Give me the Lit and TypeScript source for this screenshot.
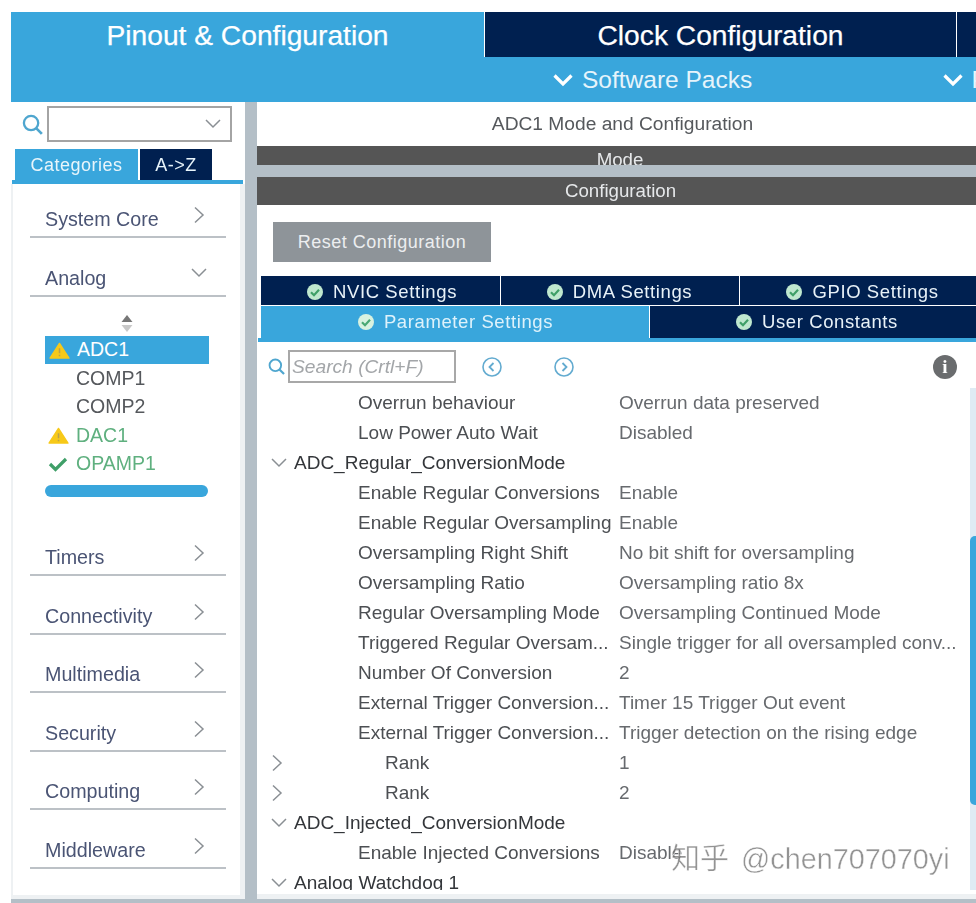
import { LitElement, html, css } from "lit";
import { customElement } from "lit/decorators.js";

const chevR = () => html`<svg class="ch r" viewBox="0 0 14 18" width="14" height="18"><path d="M3 1.5l8 7.5-8 7.5" fill="none" stroke="#8a8f94" stroke-width="1.5"/></svg>`;
const chevD = () => html`<svg class="ch d" viewBox="0 0 18 12" width="18" height="12"><path d="M2 2l7 7 7-7" fill="none" stroke="#8a8f94" stroke-width="1.5"/></svg>`;
const whiteChev = html`<svg viewBox="0 0 22 14" width="22" height="14"><path d="M2.5 2.5L11 11l8.5-8.5" fill="none" stroke="#fff" stroke-width="3.2"/></svg>`;
const okDot = html`<svg viewBox="0 0 18 18" width="18" height="18"><circle cx="9" cy="9" r="8" fill="#bfe8cf"/><path d="M5 9.2l3 3 5-5.4" fill="none" stroke="#3f9f68" stroke-width="2.2"/></svg>`;
const okDotB = html`<svg viewBox="0 0 18 18" width="18" height="18"><circle cx="9" cy="9" r="8" fill="#d8f2e0"/><path d="M5 9.2l3 3 5-5.4" fill="none" stroke="#49a873" stroke-width="2.2"/></svg>`;
const warn = html`<svg viewBox="0 0 22 18" width="21" height="17"><path d="M11 1.5L21 17H1z" fill="#f7c919" stroke="#f7c919" stroke-width="1.5" stroke-linejoin="round"/><path d="M11 6.5v5.5M11 13.5v1.6" stroke="#b9a24e" stroke-width="1.6"/></svg>`;
const tick = html`<svg viewBox="0 0 20 16" width="20" height="16"><path d="M2 8l5.5 5.5L18 3" fill="none" stroke="#3f9f68" stroke-width="3.2"/></svg>`;
const lens = (size: number) => html`<svg viewBox="0 0 22 22" width=${size} height=${size}><circle cx="9.5" cy="9.5" r="7.5" fill="none" stroke="#4fa6cf" stroke-width="2.4"/><path d="M14.8 14.8l6 6" stroke="#4fa6cf" stroke-width="2.8"/></svg>`;
const navBtn = (d: string) => html`<svg viewBox="0 0 22 22" width="22" height="22"><circle cx="11" cy="11" r="9" fill="none" stroke="#63abd0" stroke-width="1.6"/><path d=${d} fill="none" stroke="#63abd0" stroke-width="1.8"/></svg>`;

const cats = ["System Core", "Analog", "Timers", "Connectivity", "Multimedia", "Security", "Computing", "Middleware"];

type Row = { k: "p" | "g" | "r"; a: string; b?: string };
const rows: Row[] = [
  { k: "p", a: "Overrun behaviour", b: "Overrun data preserved" },
  { k: "p", a: "Low Power Auto Wait", b: "Disabled" },
  { k: "g", a: "ADC_Regular_ConversionMode" },
  { k: "p", a: "Enable Regular Conversions", b: "Enable" },
  { k: "p", a: "Enable Regular Oversampling", b: "Enable" },
  { k: "p", a: "Oversampling Right Shift", b: "No bit shift for oversampling" },
  { k: "p", a: "Oversampling Ratio", b: "Oversampling ratio 8x" },
  { k: "p", a: "Regular Oversampling Mode", b: "Oversampling Continued Mode" },
  { k: "p", a: "Triggered Regular Oversam...", b: "Single trigger for all oversampled conv..." },
  { k: "p", a: "Number Of Conversion", b: "2" },
  { k: "p", a: "External Trigger Conversion...", b: "Timer 15 Trigger Out event" },
  { k: "p", a: "External Trigger Conversion...", b: "Trigger detection on the rising edge" },
  { k: "r", a: "Rank", b: "1" },
  { k: "r", a: "Rank", b: "2" },
  { k: "g", a: "ADC_Injected_ConversionMode" },
  { k: "p", a: "Enable Injected Conversions", b: "Disable" },
  { k: "g", a: "Analog Watchdog 1" },
];

@customElement("app-root")
export class AppRoot extends LitElement {
  static styles = css`
    :host { display: block; width: 976px; height: 903px; overflow: hidden; position: relative; background: #fff;
      font-family: "Liberation Sans", Arial, sans-serif; color: #55585c; font-size: 19px; }
    * { box-sizing: border-box; }
    .page { padding: 12px 0 0 11px; height: 903px; display: flex; flex-direction: column; filter: blur(0.35px); }
    .top { background: #39a6dc; height: 90px; flex: none; overflow: hidden; }
    .tabs { display: flex; height: 45px; font-size: 28.2px; color: #fff; }
    .tabs > div { display: flex; align-items: center; justify-content: center; padding-top: 1px; -webkit-text-stroke: .25px #fff; }
    .t1 { width: 473px; }
    .t2 { width: 472px; background: #002050; border-left: 1px solid #fff; }
    .t3 { flex: 1; background: #002050; border-left: 1px solid #fff; }
    .menus { display: flex; height: 45px; padding-left: 541px; color: #e6f4fb; font-size: 24.5px; }
    .menu { flex: none; width: 389.5px; display: flex; align-items: center; gap: 8px; white-space: nowrap; }
    .main { flex: 1; display: flex; min-height: 0; }
    .left { width: 234px; flex: none; display: flex; flex-direction: column; }
    .divider { width: 12px; flex: none; background: #b4bfc7; }
    .right { flex: 1; min-width: 0; display: flex; flex-direction: column; border-bottom: 5px solid #eef1f3; }
    .find { display: flex; align-items: center; height: 47px; padding: 0 0 3px 11px; gap: 4px; flex: none; }
    .find .sel { width: 185px; height: 36px; border: 2px solid #a4a4a4; display: flex; align-items: center; justify-content: flex-end; padding-right: 8px; }
    .cat-tabs { display: flex; height: 31px; margin-left: 4px; font-size: 18px; letter-spacing: .5px; flex: none; }
    .cat-tabs div { display: flex; align-items: center; justify-content: center; color: #e8f5fb; padding-top: 1px; }
    .ct1 { width: 123px; background: #39a6dc; }
    .ct2 { width: 72px; margin-left: 2px; background: #002050; }
    .cat-line { height: 4px; margin: 0 2px 0 1px; background: #39a6dc; flex: none; }
    .cat-body { border-left: 2px solid #eef1f3; border-right: 5px solid #eef1f3; border-bottom: 4px solid #eef1f3; flex: 1; padding: 0 14px 0 17px; overflow: hidden; min-height: 0; }
    .cat { height: 58.5px; border-bottom: 2px solid #bcc1c6; display: flex; align-items: flex-end; justify-content: space-between; padding: 0 20px 5px 15px; font-size: 19.7px; color: #4a5474; }
    .cat.first { height: 54px; }
    .cat .ch.r { margin-bottom: 7px; }
    .cat .ch.d { margin: 0 -2px 11px 0; }
    .sub { height: 221px; display: flex; flex-direction: column; padding-left: 15px; }
    .updown { width: 12px; margin: 18px 0 4px 76px; height: 17px; flex: none; }
    .sub-row { height: 28.5px; display: flex; align-items: center; flex: none; padding-left: 31px; font-size: 19.5px; position: relative; }
    .sub-row svg { position: absolute; left: 3px; top: 6px; }
    .sub-row.sel { background: #39a6dc; color: #fff; width: 164px; padding-left: 32px; }
    .sub-row.sel svg { left: 4px; }
    .sub-row.grn { color: #5fb07f; }
    .hbar { width: 163px; height: 12px; border-radius: 6px; background: #39a6dc; margin-top: 7px; flex: none; }
    .title { height: 44px; flex: none; display: flex; align-items: center; justify-content: center; font-size: 19.2px; padding-left: 12px; }
    .bar { background: #555; color: #e6e8ea; display: flex; justify-content: center; font-size: 18.7px; flex: none; overflow: hidden; }
    .bar.mode { height: 19px; align-items: flex-start; padding: 3px 0 0 7px; }
    .gap { height: 12px; background: #b4bfc7; flex: none; }
    .bar.conf { height: 28px; align-items: center; padding: 0 0 0 8px; }
    .reset { width: 218px; height: 40px; margin: 17px 0 0 16px; background: #8e9499; color: #eceef0; display: flex; align-items: center; justify-content: center; letter-spacing: .5px; font-size: 18px; flex: none; }
    .stabs { margin: 14px 0 0 4px; flex: none; color: #e8f2f8; font-size: 18.5px; letter-spacing: .6px; }
    .srow { display: flex; gap: 1px; height: 29px; margin-bottom: 1px; }
    .srow > div { background: #002050; flex: none; display: flex; align-items: center; justify-content: center; gap: 9px; padding-top: 2px; }
    .srow.two { height: 32px; margin-bottom: 0; }
    .srow.two > div { padding-top: 0; }
    .srow .on { background: #39a6dc; color: #def2fb; }
    .w239 { width: 239px; padding-left: 2px; }
    .w238 { width: 238px; }
    .w238.dma { padding-right: 2px; }
    .w238.gpio { padding-left: 6px; }
    .w388 { width: 388px; }
    .w326 { width: 326px; padding-left: 7px; }
    .sline { height: 4px; background: #39a6dc; flex: none; margin-left: 1px; }
    .tools { height: 46px; flex: none; display: flex; align-items: center; padding: 3px 0 0 11px; }
    .tools .in { width: 168px; height: 33px; border: 2px solid #a8a8a8; margin-left: 3px; font: italic 19.2px "Liberation Sans", sans-serif; color: #a3a6a9; padding-left: 2px; display: flex; align-items: center; white-space: nowrap; overflow: hidden; }
    .tools .nav { margin-left: 25px; display: flex; gap: 50px; }
    .tools .info { margin-left: auto; margin-right: 19px; width: 24px; height: 24px; border-radius: 50%; background: #6a6c6e; color: #fff; font: bold 19px/24px "Liberation Serif", serif; text-align: center; }
    .tree { flex: 1; min-height: 0; display: flex; overflow: hidden; margin-bottom: 4px; }
    .list { flex: 1; min-width: 0; padding-left: 13px; }
    .row { height: 30px; display: flex; align-items: center; white-space: nowrap; font-size: 19px; }
    .row .ico { width: 24px; flex: none; display: flex; }
    .row .a { flex: none; width: 325px; padding-left: 64px; color: #4c4f53; }
    .row.r .a { padding-left: 91px; }
    .row.g .a { padding-left: 0; color: #33363a; width: auto; }
    .row .b { color: #676a6e; }
    .scroll { width: 6px; flex: none; background: #dfebf4; display: flex; flex-direction: column; }
    .thumb { height: 269px; margin-top: 148px; background: #39a6dc; border-radius: 5px 0 0 5px; }
    .foot { height: 4px; flex: none; background: #b4bfc7; }
    .wm { position: absolute; left: 671px; top: 835px; font: 28.8px "Liberation Sans", "Noto Sans CJK SC", sans-serif; color: rgba(120,120,120,.8); white-space: nowrap; -webkit-text-stroke: .4px #fff; }
    .wm b { font: 29px "Noto Sans CJK SC", sans-serif; margin-right: 12px; }
  `;

  private renderCat(name: string, i: number) {
    const open = name === "Analog";
    return html`<div class="cat ${i === 0 ? "first" : ""}"><span>${name}</span>${open ? chevD() : chevR()}</div>
      ${open
        ? html`<div class="sub">
            <svg class="updown" viewBox="0 0 12 17"><path d="M6 0l5.5 7H.5z" fill="#777"/><path d="M6 17l5.5-7H.5z" fill="#c8c8c8"/></svg>
            <div class="sub-row sel">${warn}ADC1</div>
            <div class="sub-row">COMP1</div>
            <div class="sub-row">COMP2</div>
            <div class="sub-row grn">${warn}DAC1</div>
            <div class="sub-row grn">${tick}OPAMP1</div>
            <div class="hbar"></div>
          </div>`
        : ""}`;
  }

  private renderRow(r: Row) {
    const ico = r.k === "g" ? chevD() : r.k === "r" ? chevR() : "";
    return html`<div class="row ${r.k}"><span class="ico">${ico}</span><span class="a">${r.a}</span>${r.b ? html`<span class="b">${r.b}</span>` : ""}</div>`;
  }

  render() {
    return html`<div class="page">
        <div class="top">
          <div class="tabs">
            <div class="t1">Pinout &amp; Configuration</div>
            <div class="t2">Clock Configuration</div>
            <div class="t3"></div>
          </div>
          <div class="menus">
            <div class="menu">${whiteChev}<span>Software Packs</span></div>
            <div class="menu">${whiteChev}<span>Pinout</span></div>
          </div>
        </div>
        <div class="main">
          <div class="left">
            <div class="find">${lens(21)}<div class="sel">${chevD()}</div></div>
            <div class="cat-tabs"><div class="ct1">Categories</div><div class="ct2">A-&gt;Z</div></div>
            <div class="cat-line"></div>
            <div class="cat-body">${cats.map((c, i) => this.renderCat(c, i))}</div>
          </div>
          <div class="divider"></div>
          <div class="right">
            <div class="title">ADC1 Mode and Configuration</div>
            <div class="bar mode">Mode</div>
            <div class="gap"></div>
            <div class="bar conf">Configuration</div>
            <div class="reset">Reset Configuration</div>
            <div class="stabs">
              <div class="srow">
                <div class="w239">${okDot}<span>NVIC Settings</span></div>
                <div class="w238 dma">${okDot}<span>DMA Settings</span></div>
                <div class="w238 gpio">${okDot}<span>GPIO Settings</span></div>
              </div>
              <div class="srow two">
                <div class="on w388">${okDotB}<span>Parameter Settings</span></div>
                <div class="w326">${okDot}<span>User Constants</span></div>
              </div>
            </div>
            <div class="sline"></div>
            <div class="tools">
              ${lens(17)}
              <div class="in">Search (Crtl+F)</div>
              <div class="nav">
                ${navBtn("M12.5 7l-4 4 4 4")}${navBtn("M9.5 7l4 4-4 4")}
              </div>
              <div class="info">i</div>
            </div>
            <div class="tree">
              <div class="list">${rows.map((r) => this.renderRow(r))}</div>
              <div class="scroll"><div class="thumb"></div></div>
            </div>
          </div>
        </div>
        <div class="foot"></div>
      </div>
      <div class="wm"><b>知乎</b>@chen707070yi</div>`;
  }
}
